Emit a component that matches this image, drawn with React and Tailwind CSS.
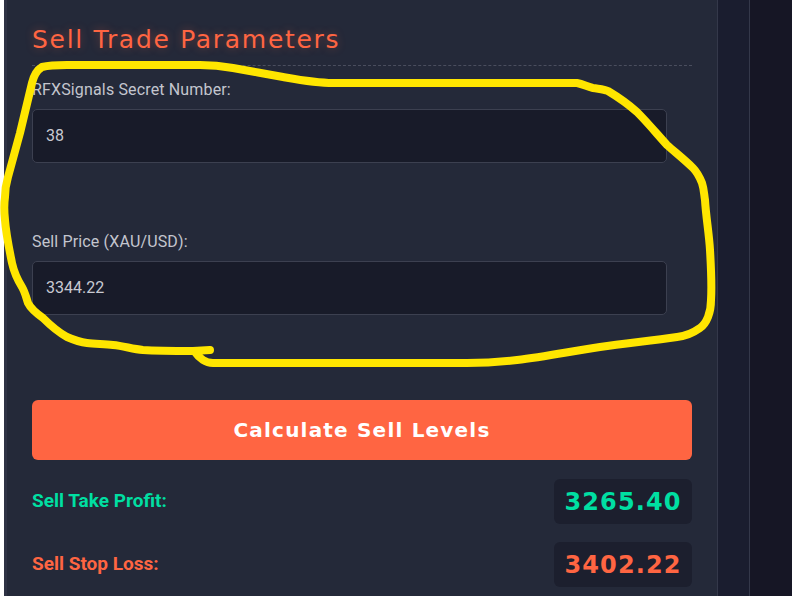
import React from 'react';

const scribble = 'M210 350 L193 351 C175 351 158 351 143 350 C132 349 124 346 113 345 C104 344 95 344 87 343 C79 342 74 340 67 337 C58 332 50 325 43 318 C36 313 31 309 28 303 C26 297 25 292 22 287 C17 279 14 272 12 263 C9 248 6 234 5 220 C4 211 4 204 5 197 C5 190 6 184 8 177 C12 162 16 148 20 133 C24 116 28 99 32 83 C34 75 37 70 42 67 C50 65 58 65 67 65 L200 65 C212 65 222 66 233 68 C250 71 266 74 283 77 C300 80 316 83 333 83 L577 83 C583 84 588 87 593 88 C599 89 604 89 608 91 C618 97 628 104 637 112 C648 123 657 134 667 145 C676 153 685 160 693 168 C698 173 700 178 702 183 C704 189 704 194 705 200 C706 217 709 233 710 250 C711 267 712 284 711 300 C711 307 710 312 708 317 C706 322 703 326 700 328 C693 333 686 336 677 337 C651 341 626 343 600 347 C572 351 545 357 517 360 C500 362 484 363 467 363 L213 363 C209 363 206 362 203 360 C200 358 197 355 195 352';

function Field({ label, value, className = '' }) {
  return (
    <div className={className}>
      <label className="block text-[16px] leading-[20px] tracking-[0.15px] text-[#c3c5ce]">{label}</label>
      <div className="mt-[9px] flex h-[54px] w-[635px] items-center rounded-[5px] border border-[#3c4050] bg-[#181b29] px-[13px] text-[16px] text-[#c8cad2]">
        {value}
      </div>
    </div>
  );
}

function Result({ label, value, color, className = '' }) {
  return (
    <div className={`flex items-center justify-between ${className}`}>
      <span className={`text-[19px] font-bold ${color}`}>{label}</span>
      <span className={`flex h-[45px] w-[138px] items-center justify-center rounded-[6px] bg-[#1c1f2e] font-['DejaVu_Sans'] text-[24px] font-bold tracking-[1.1px] ${color}`}>
        {value}
      </span>
    </div>
  );
}

export default function App() {
  return (
    <div className="relative flex h-[596px] overflow-hidden bg-white font-['Roboto',sans-serif]">
      <div className="w-1 shrink-0 bg-white" />
      <section className="w-[714px] shrink-0 border-l-[3px] border-r border-l-[#2e3244] border-r-[#34384a] bg-[#242939] pl-[25px] pr-[25px] pt-[25px]">
        <h2 className="h-[41px] border-b border-dashed border-[#4a4e5e] font-['DejaVu_Sans',sans-serif] text-[25px] leading-[30px] tracking-[1.7px] text-[#ff6542] [text-shadow:0_0_8px_rgba(255,101,66,0.35)]">
          Sell Trade Parameters
        </h2>
        <Field label="RFXSignals Secret Number:" value="38" className="mt-[14px]" />
        <Field label="Sell Price (XAU/USD):" value="3344.22" className="mt-[69px]" />
        <button className="mt-[85px] flex h-[60px] w-full items-center justify-center rounded-[6px] bg-[#ff6542] font-['DejaVu_Sans',sans-serif] text-[20px] font-bold tracking-[1.2px] text-white">
          Calculate Sell Levels
        </button>
        <Result label="Sell Take Profit:" value="3265.40" color="text-[#00dfa2]" className="mt-[19px]" />
        <Result label="Sell Stop Loss:" value="3402.22" color="text-[#ff6542]" className="mt-[18px]" />
      </section>
      <div className="w-[32px] shrink-0 border-r border-[#34384a] bg-[#1a1d2f]" />
      <div className="flex-1 bg-[#161625]" />
      <svg className="pointer-events-none absolute left-0 top-0" width="792" height="596" viewBox="0 0 792 596" fill="none">
        <path d={scribble} stroke="#ffe600" strokeWidth="8" strokeLinecap="round" strokeLinejoin="round" />
      </svg>
    </div>
  );
}
